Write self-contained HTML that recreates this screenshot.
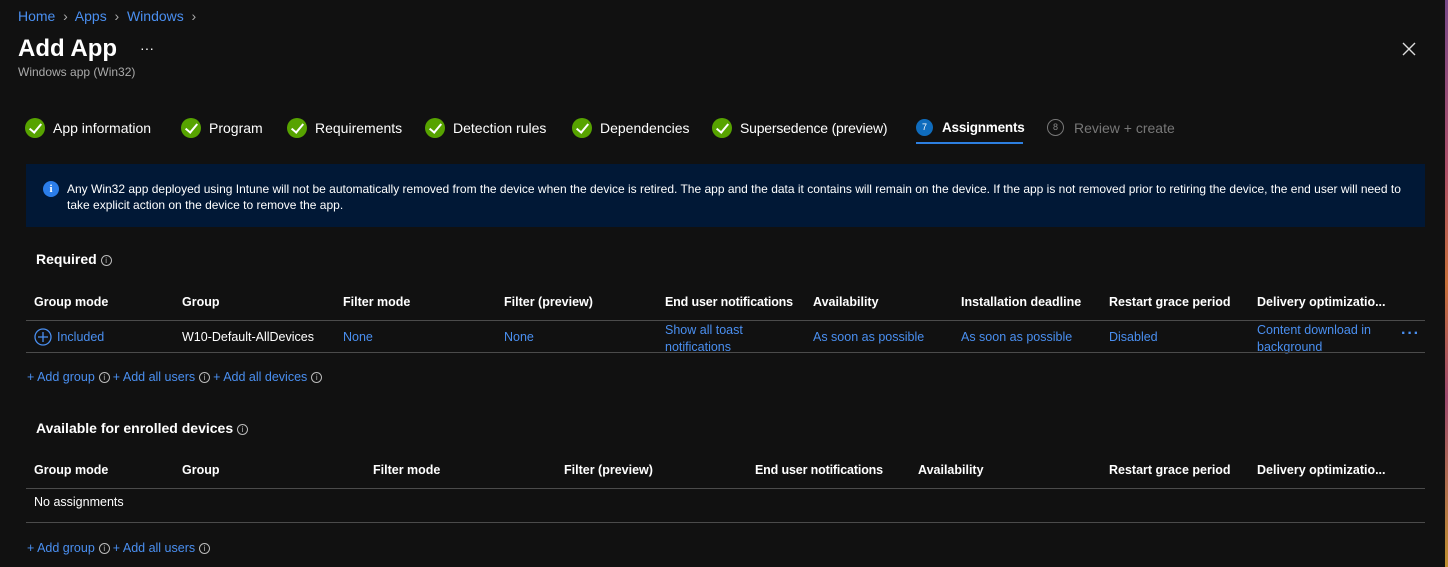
<!DOCTYPE html>
<html><head><meta charset="utf-8"><style>
*{margin:0;padding:0;box-sizing:border-box}
body{width:1448px;height:567px;background:#111;overflow:hidden;position:relative;font-family:"Liberation Sans",Arial,sans-serif;color:#fff;font-size:12.5px}
.a{position:absolute;white-space:nowrap;line-height:16px}
.l{color:#4a8ff0}
.b{font-weight:bold}
.g{color:#aaa}
.line{position:absolute;height:1px;background:#4b4b4b;left:26px;width:1399px}
.chk{position:absolute;width:20px;height:20px;border-radius:50%;background:#57a300}
.chk:after{content:"";position:absolute;left:7px;top:3px;width:5px;height:10px;border:solid #fff;border-width:0 2.5px 2.5px 0;transform:rotate(40deg)}
.inf{display:inline-block;width:11px;height:11px;border:1px solid #bbb;border-radius:50%;font-size:8px;line-height:9px;text-align:center;color:#bbb;vertical-align:middle;margin:0 3px 0 4px;font-weight:normal}
</style></head><body>
<div style="position:absolute;right:0;top:0;width:3px;height:567px;background:linear-gradient(#7a4a8a,#b0506a 30%,#c8703a 50%,#a04a70 70%,#c09030)"></div>

<div class="a l" style="left:18px;top:8px;font-size:14px">Home <span class="g">&nbsp;›&nbsp;</span> Apps <span class="g">&nbsp;›&nbsp;</span> Windows <span class="g">&nbsp;›</span></div>
<div class="a b" style="left:18px;top:35px;font-size:24px;line-height:28px">Add App</div>
<div class="a" style="left:140px;top:40px;font-size:14px">···</div>
<div class="a g" style="left:18px;top:64px;font-size:12px">Windows app (Win32)</div>
<svg style="position:absolute;left:1402px;top:42px" width="14" height="14"><path d="M1 1L13 13M13 1L1 13" stroke="#ddd" stroke-width="1.4"/></svg>

<div class="chk" style="left:25px;top:118px"></div><div class="a" style="left:53px;top:120px;font-size:14px">App information</div>
<div class="chk" style="left:181px;top:118px"></div><div class="a" style="left:209px;top:120px;font-size:14px">Program</div>
<div class="chk" style="left:287px;top:118px"></div><div class="a" style="left:315px;top:120px;font-size:14px">Requirements</div>
<div class="chk" style="left:425px;top:118px"></div><div class="a" style="left:453px;top:120px;font-size:14px">Detection rules</div>
<div class="chk" style="left:572px;top:118px"></div><div class="a" style="left:600px;top:120px;font-size:14px">Dependencies</div>
<div class="chk" style="left:712px;top:118px"></div><div class="a" style="left:740px;top:120px;font-size:14px;letter-spacing:-0.2px">Supersedence (preview)</div>
<div style="position:absolute;left:916px;top:119px;width:17px;height:17px;border-radius:50%;background:#0f6cbd;font-size:9px;text-align:center;line-height:17px">7</div>
<div class="a b" style="left:942px;top:120px;font-size:13.5px;letter-spacing:-0.2px">Assignments</div>
<div style="position:absolute;left:916px;top:142px;width:107px;height:2px;background:#2d7fe0"></div>
<div style="position:absolute;left:1047px;top:119px;width:17px;height:17px;border-radius:50%;border:1px solid #777;color:#888;font-size:9px;text-align:center;line-height:15px">8</div>
<div class="a" style="left:1074px;top:120px;font-size:14px;color:#777">Review + create</div>

<div style="position:absolute;left:26px;top:164px;width:1399px;height:63px;background:#011836"></div>
<div style="position:absolute;left:43px;top:181px;width:16px;height:16px;border-radius:50%;background:#2b7de9;font-size:11px;font-weight:bold;text-align:center;line-height:16px;font-family:'Liberation Serif',serif">i</div>
<div class="a" style="left:67px;top:181px;font-size:12px;width:1350px;white-space:normal">Any Win32 app deployed using Intune will not be automatically removed from the device when the device is retired. The app and the data it contains will remain on the device. If the app is not removed prior to retiring the device, the end user will need to take explicit action on the device to remove the app.</div>

<div class="a b" style="left:36px;top:251px;font-size:14px">Required<span class="inf">i</span></div>
<div class="a b" style="left:34px;top:294px">Group mode</div>
<div class="a b" style="left:182px;top:294px">Group</div>
<div class="a b" style="left:343px;top:294px">Filter mode</div>
<div class="a b" style="left:504px;top:294px">Filter (preview)</div>
<div class="a b" style="left:665px;top:294px;letter-spacing:-0.15px">End user notifications</div>
<div class="a b" style="left:813px;top:294px">Availability</div>
<div class="a b" style="left:961px;top:294px">Installation deadline</div>
<div class="a b" style="left:1109px;top:294px">Restart grace period</div>
<div class="a b" style="left:1257px;top:294px">Delivery optimizatio...</div>
<div class="line" style="top:320px"></div>
<svg style="position:absolute;left:34px;top:328px" width="18" height="18"><circle cx="9" cy="9" r="8" fill="none" stroke="#4a8ff0" stroke-width="1.3"/><path d="M9 4V14M4 9H14" stroke="#4a8ff0" stroke-width="1.3"/></svg>
<div class="a l" style="left:57px;top:329px">Included</div>
<div class="a" style="left:182px;top:329px">W10-Default-AllDevices</div>
<div class="a l" style="left:343px;top:329px">None</div>
<div class="a l" style="left:504px;top:329px">None</div>
<div class="a l" style="left:665px;top:322px;line-height:17px">Show all toast<br>notifications</div>
<div class="a l" style="left:813px;top:329px">As soon as possible</div>
<div class="a l" style="left:961px;top:329px">As soon as possible</div>
<div class="a l" style="left:1109px;top:329px">Disabled</div>
<div class="a l" style="left:1257px;top:322px;line-height:17px">Content download in<br>background</div>
<div class="a l" style="left:1401px;top:326px;font-size:16px;font-weight:bold;letter-spacing:1px">···</div>
<div class="line" style="top:352px"></div>
<div class="a l" style="left:27px;top:369px">+ Add group<span class="inf">i</span>+ Add all users<span class="inf">i</span>+ Add all devices<span class="inf">i</span></div>

<div class="a b" style="left:36px;top:420px;font-size:14px">Available for enrolled devices<span class="inf">i</span></div>
<div class="a b" style="left:34px;top:462px">Group mode</div>
<div class="a b" style="left:182px;top:462px">Group</div>
<div class="a b" style="left:373px;top:462px">Filter mode</div>
<div class="a b" style="left:564px;top:462px">Filter (preview)</div>
<div class="a b" style="left:755px;top:462px;letter-spacing:-0.15px">End user notifications</div>
<div class="a b" style="left:918px;top:462px">Availability</div>
<div class="a b" style="left:1109px;top:462px">Restart grace period</div>
<div class="a b" style="left:1257px;top:462px">Delivery optimizatio...</div>
<div class="line" style="top:488px"></div>
<div class="a" style="left:34px;top:494px">No assignments</div>
<div class="line" style="top:522px"></div>
<div class="a l" style="left:27px;top:540px">+ Add group<span class="inf">i</span>+ Add all users<span class="inf">i</span></div>
</body></html>
